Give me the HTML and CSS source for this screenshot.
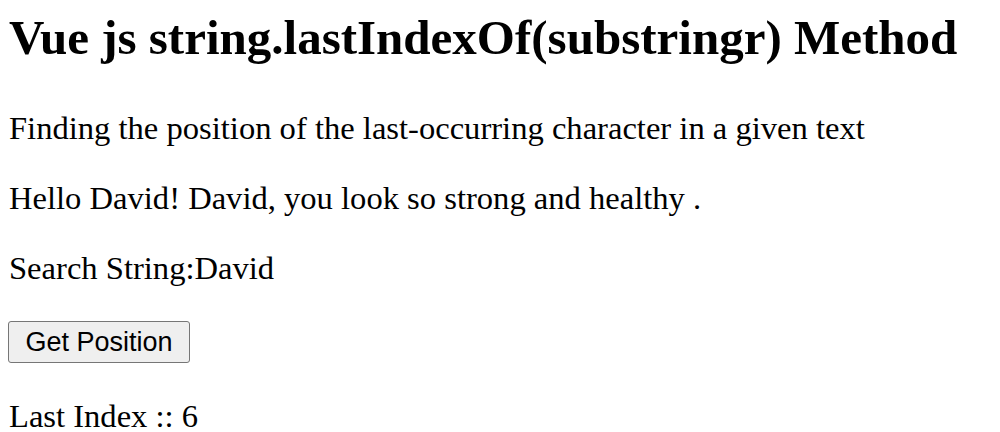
FILE: index.html
```html
<!DOCTYPE html>
<html lang="en">
<head>
    <meta charset="UTF-8">
    <title>Vue js string.lastIndexOf</title>
    <link rel="stylesheet" href="styles.css">
</head>
<body>
    <div id="app">
        <h1 class="title">Vue js string.lastIndexOf(substringr) Method</h1>
        <p class="line">Finding the position of the last-occurring character in a given text</p>
        <p class="line">Hello David! David, you look so strong and healthy .</p>
        <p class="line">Search String:David</p>
        <button class="btn" type="button">Get Position</button>
        <p class="line result">Last Index :: 6</p>
    </div>
</body>
</html>
```

FILE: styles.css
```css
body{
    margin: 0;
    padding: 0 0 0 9px;
    background: #fff;
    color: #000;
    font-family: "Liberation Serif", "Times New Roman", serif;
}
.title{
    font-size: 49px;
    line-height: 56px;
    font-weight: bold;
    margin: 10px 0 0 0;
}
.line{
    font-size: 32.6px;
    line-height: 36px;
    margin: 34px 0 0 0;
}
.title + .line{
    margin-top: 44px;
}
.btn{
    display: block;
    margin: 35px 0 0 -1px;
    width: 182px;
    height: 42px;
    padding: 0;
    font-family: "Liberation Sans", Arial, sans-serif;
    font-size: 27px;
    color: #000;
    background: #efefef;
    border: 1px solid #767676;
    border-radius: 3px;
}
.result{
    margin-top: 35px;
}
```
